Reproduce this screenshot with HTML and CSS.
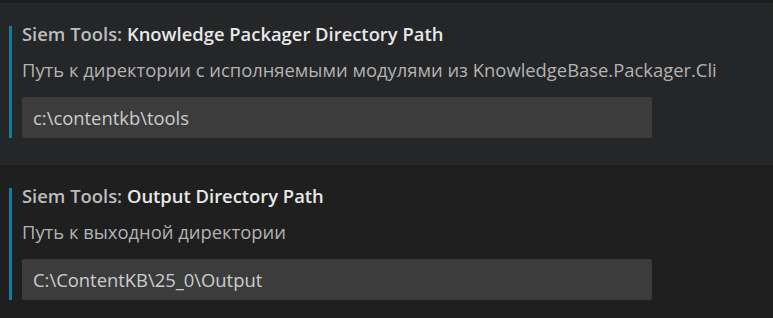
FILE: index.html
```html
<!DOCTYPE html>
<html lang="ru">
<head>
  <meta charset="UTF-8" />
  <meta name="viewport" content="width=device-width, initial-scale=1.0"/>
  <title>Settings</title>
  <link rel="stylesheet" href="styles.css">
</head>
<body>
  <div class="settings">
    <div class="setting focused">
      <div class="setting-body">
        <div class="setting-title"><span class="category">Siem Tools: </span><span class="key">Knowledge Packager Directory Path</span></div>
        <div class="setting-desc">Путь к директории с исполняемыми модулями из KnowledgeBase.Packager.Cli</div>
        <input class="setting-input" type="text" value="c:\contentkb\tools" />
      </div>
    </div>

    <div class="setting">
      <div class="setting-body">
        <div class="setting-title"><span class="category">Siem Tools: </span><span class="key">Output Directory Path</span></div>
        <div class="setting-desc">Путь к выходной директории</div>
        <input class="setting-input" type="text" value="C:\ContentKB\25_0\Output" />
      </div>
    </div>
  </div>
</body>
</html>
```

FILE: styles.css
```css
body {
  margin: 0;
  background-color: #1f1f1f;
  font-family: 'Open Sans', 'Noto Sans', sans-serif;
  font-size: 18.4px;
  overflow: hidden;
}

.settings {
  padding-top: 3px;
}

.setting {
  padding: 23px 0 27px 9px;
}

.setting.focused {
  background: #252628;
}

.setting-body {
  border-left: 3px solid #137b9c;
  padding-left: 10px;
}

.setting-title {
  line-height: 16px;
  font-weight: 600;
  white-space: nowrap;
}

.category {
  color: #bdbdbd;
}

.key {
  color: #e8e8e8;
}

.setting-desc {
  margin-top: 16px;
  line-height: 24px;
  color: #b3b3b3;
  white-space: nowrap;
}

.setting-input {
  display: block;
  box-sizing: border-box;
  margin-top: 15px;
  width: 630px;
  height: 41px;
  padding: 0 11px;
  border: none;
  border-radius: 2px;
  outline: none;
  background: #3c3c3c;
  color: #cccccc;
  font-family: inherit;
  font-size: 18.4px;
}
```
